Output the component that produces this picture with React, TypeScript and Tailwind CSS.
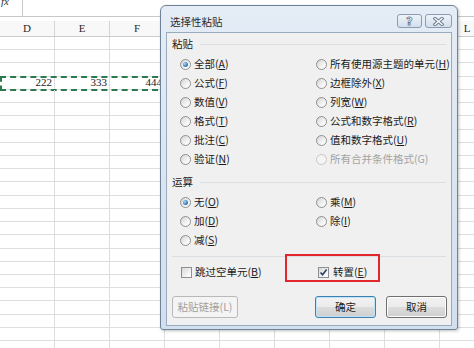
import React from 'react';

const CJK = "font-['Noto_Sans_CJK_SC','Noto_Sans',sans-serif]";

function Radio({ checked = false, disabled = false }: { checked?: boolean; disabled?: boolean }) {
  return (
    <span
      className={
        'relative flex h-[11px] w-[11px] shrink-0 items-center justify-center rounded-full border ' +
        (disabled
          ? 'border-[#c6c6c6] bg-[#f4f4f4]'
          : 'border-[#8e8f8f] bg-[linear-gradient(135deg,#d4d4d4,#f8f8f8_70%,#ffffff)]')
      }
    >
      {checked && (
        <span className="h-[5px] w-[5px] rounded-full bg-[radial-gradient(circle_at_35%_35%,#a6d8fb,#2a70b4_70%,#1a4f86)]" />
      )}
    </span>
  );
}

function Check({ checked = false }: { checked?: boolean }) {
  return (
    <span className="flex h-[11px] w-[11px] shrink-0 items-center justify-center border border-[#8e8f8f] bg-[linear-gradient(135deg,#d8d8d8,#f6f6f6_70%,#ffffff)]">
      {checked && (
        <svg width="9" height="9" viewBox="0 0 9 9">
          <path d="M1.5 4.5 L3.6 6.8 L7.6 1.6" fill="none" stroke="#2b3f66" strokeWidth="1.6" />
        </svg>
      )}
    </span>
  );
}

function Label({ text, k, disabled = false }: { text: string; k: string; disabled?: boolean }) {
  return (
    <span className={'whitespace-nowrap text-[10.5px] leading-none ' + (disabled ? 'text-[#a3a3a3]' : 'text-[#1b1b1b]')}>
      {text}(
      {disabled ? k : <u className="underline-offset-[1px]">{k}</u>})
    </span>
  );
}

function RadioItem({ text, k, checked, disabled }: { text: string; k: string; checked?: boolean; disabled?: boolean }) {
  return (
    <div className="flex h-[19px] items-center gap-[3px]">
      <Radio checked={checked} disabled={disabled} />
      <Label text={text} k={k} disabled={disabled} />
    </div>
  );
}

function GroupHead({ title }: { title: string }) {
  return (
    <div className="flex h-[18px] items-center gap-[7px] px-[5px]">
      <span className="text-[10.5px] leading-none text-[#1b1b1b]">{title}</span>
      <div className="h-0 flex-1 border-t border-[#d9dee3]" />
    </div>
  );
}

function Sheet() {
  const cols = ['D', 'E', 'F', 'G', 'H', 'I', 'J', 'K', 'L'];
  const rows = Array.from({ length: 24 }, (_, i) => i);
  const values: Record<string, string> = { D: '222', E: '333', F: '444' };
  return (
    <div className="flex w-[495px] flex-col bg-white font-['Liberation_Serif',serif]">
      <div className="flex h-[17px] border-b border-[#c8c8c8]">
        <div className="w-[23px] overflow-hidden border-r border-[#c8c8c8]">
          <div className="-mt-[5px] pl-[1px] text-[11px] italic leading-[12px] text-[#333]">fx</div>
        </div>
      </div>
      <div className="mt-[4px] flex h-[16px] border-b border-[#c9cbcd] bg-[#f8f8f8]">
        {cols.map((c) => (
          <div
            key={c}
            className="flex w-[55px] shrink-0 items-center justify-center border-r border-[#d2d4d6] text-[11px] leading-none text-[#2a2a2a]"
          >
            {c}
          </div>
        ))}
      </div>
      {rows.map((r) => (
        <div key={r} className="relative flex h-[13.23px]">
          {cols.map((c) => (
            <div
              key={c}
              className="flex w-[55px] shrink-0 items-center justify-end border-r border-b border-[#dcdee0] pr-[2px] text-[11px] leading-none text-[#1a1a1a]"
            >
              {r === 3 ? values[c] ?? '' : ''}
            </div>
          ))}
          {r === 3 && (
            <div className="absolute -top-[1px] left-0 h-[15px] w-[300px] border-2 border-dashed border-[#2a7a4f]" />
          )}
        </div>
      ))}
    </div>
  );
}

export default function App() {
  return (
    <div className={'relative h-[348px] w-[474px] overflow-hidden bg-white ' + CJK}>
      <Sheet />

      <div className="absolute left-[160px] top-[5px] flex h-[325px] w-[298px] flex-col rounded-t-[6px] rounded-b-[3px] border border-[#6f8296] bg-[linear-gradient(#e4ecf6,#d2dfee)] shadow-[1px_1px_3px_rgba(0,0,0,0.25)]">
        <div className="flex h-[26px] shrink-0 items-start">
          <span className={'pl-[9px] pt-[10px] text-[10.5px] leading-[12px] text-[#2b2b2b] ' + CJK}>选择性粘贴</span>
          <div className="ml-auto mr-[5px] mt-[8px] flex gap-[3px]">
            <div className="flex h-[14px] w-[25px] items-center justify-center rounded-[3px] border border-[#8d9db1] bg-[linear-gradient(#eef3f9,#d3dfed)]">
              <span className="font-['DejaVu_Sans',sans-serif] text-[11px] font-bold leading-none text-white [-webkit-text-stroke:0.8px_#6d7d91]">
                ?
              </span>
            </div>
            <div className="flex h-[14px] w-[27px] items-center justify-center rounded-[3px] border border-[#8d9db1] bg-[linear-gradient(#eef3f9,#d3dfed)]">
              <svg width="11" height="9" viewBox="0 0 11 9">
                <path d="M2 1.5 L9 7.5 M9 1.5 L2 7.5" stroke="#6d7d91" strokeWidth="3.4" strokeLinecap="square" />
                <path d="M2 1.5 L9 7.5 M9 1.5 L2 7.5" stroke="#ffffff" strokeWidth="1.3" strokeLinecap="square" />
              </svg>
            </div>
          </div>
        </div>

        <div className="mx-[5px] mb-[3px] flex flex-1 flex-col border border-[#9aabbf] bg-[#f0f0f0] pt-[2px]">
          <GroupHead title="粘贴" />
          <div className="mt-[2px] grid grid-cols-[136px_1fr] pl-[13px]">
            <div className="flex flex-col">
              <RadioItem text="全部" k="A" checked />
              <RadioItem text="公式" k="F" />
              <RadioItem text="数值" k="V" />
              <RadioItem text="格式" k="T" />
              <RadioItem text="批注" k="C" />
              <RadioItem text="验证" k="N" />
            </div>
            <div className="flex flex-col">
              <RadioItem text="所有使用源主题的单元" k="H" />
              <RadioItem text="边框除外" k="X" />
              <RadioItem text="列宽" k="W" />
              <RadioItem text="公式和数字格式" k="R" />
              <RadioItem text="值和数字格式" k="U" />
              <RadioItem text="所有合并条件格式" k="G" disabled />
            </div>
          </div>

          <div className="mt-[4px]">
            <GroupHead title="运算" />
          </div>
          <div className="mt-[2px] grid grid-cols-[136px_1fr] pl-[13px]">
            <div className="flex flex-col">
              <RadioItem text="无" k="O" checked />
              <RadioItem text="加" k="D" />
              <RadioItem text="减" k="S" />
            </div>
            <div className="flex flex-col">
              <RadioItem text="乘" k="M" />
              <RadioItem text="除" k="I" />
            </div>
          </div>

          <div className="mx-[5px] mt-[6px] h-0 border-t border-[#d9dee3]" />

          <div className="mt-[6px] grid h-[19px] grid-cols-[136px_1fr] pl-[14px]">
            <div className="flex items-center gap-[3px]">
              <Check />
              <Label text="跳过空单元" k="B" />
            </div>
            <div className="flex items-center gap-[4px] pl-[1px]">
              <Check checked />
              <Label text="转置" k="E" />
            </div>
          </div>

          <div className="mt-[14px] flex h-[22px] pl-[5px] pr-[4px]">
            <div className="flex w-[66px] items-center justify-center rounded-[3px] border border-[#b9b9b9] bg-[#f4f4f4] text-[10.5px] leading-none text-[#a0a0a0]">
              粘贴链接(L)
            </div>
            <div className="ml-auto flex w-[61px] items-center justify-center rounded-[3px] border border-[#3c7fb1] bg-[linear-gradient(#f2f2f2_0%,#ebebeb_50%,#dddddd_50%,#cfcfcf_100%)] text-[10.5px] leading-none text-[#1b1b1b] shadow-[inset_0_0_0_1px_#bfe4f9]">
              确定
            </div>
            <div className="ml-[10px] flex w-[61px] items-center justify-center rounded-[3px] border border-[#707070] bg-[linear-gradient(#f2f2f2_0%,#ebebeb_50%,#dddddd_50%,#cfcfcf_100%)] text-[10.5px] leading-none text-[#1b1b1b] shadow-[inset_0_0_0_1px_#fcfcfc]">
              取消
            </div>
          </div>
        </div>
      </div>

      <div className="absolute left-[285px] top-[254px] h-[28px] w-[95px] border-2 border-[#e1262c]" />
    </div>
  );
}
